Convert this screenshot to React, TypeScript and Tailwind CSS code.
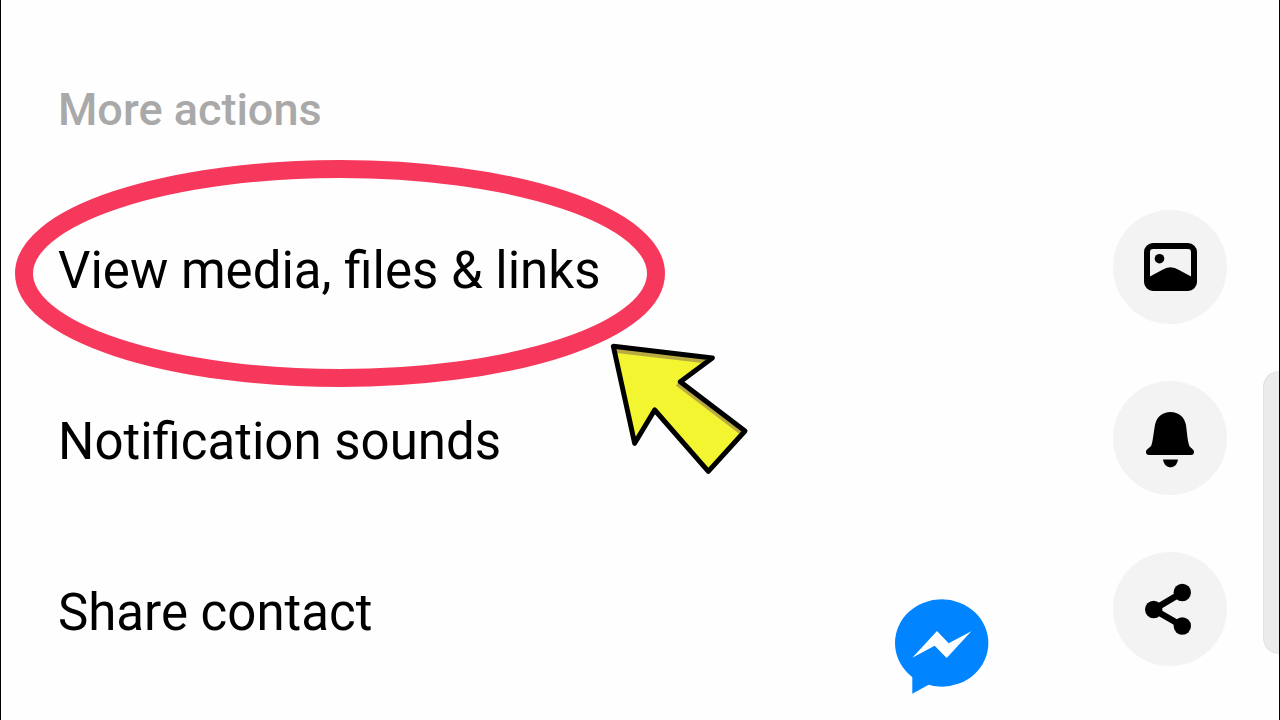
import type { ReactNode } from 'react'

const ImageIcon = () => (
  <svg viewBox="0 0 114 114" className="size-full" aria-hidden="true">
    <rect
      x="34"
      y="36"
      width="47"
      height="42"
      rx="6"
      fill="none"
      stroke="#000"
      strokeWidth="6"
    />
    <circle cx="46.5" cy="48.7" r="4.8" />
    <path d="M36 67 L49 60 Q57.5 54.5 66 60 L79 67 V79 H36 Z" />
  </svg>
)

const BellIcon = () => (
  <svg viewBox="0 0 114 114" className="size-full" aria-hidden="true">
    <path d="M57.5 31 C65.5 31 71.5 36 73 44 C74 52 74.5 59 76 64 C77 67.5 81 67.5 81 71 Q81 74 78 74 H36 Q33 74 33 71 C33 67.5 37 67.5 38.5 64 C40 59 40.5 52 42 44 C43.5 36 49.5 31 57.5 31 Z" />
    <path d="M50 78.5 H65 C64 84 61 86.3 57.5 86.3 C54 86.3 51 84 50 78.5 Z" />
  </svg>
)

const ShareIcon = () => (
  <svg viewBox="0 0 114 114" className="size-full" aria-hidden="true">
    <path
      d="M69.3 40.5 L40.7 57.5 L69.3 74"
      fill="none"
      stroke="#000"
      strokeWidth="6.5"
    />
    <circle cx="40.7" cy="57.5" r="8.7" />
    <circle cx="69.3" cy="40.5" r="8.7" />
    <circle cx="69.3" cy="74" r="8.7" />
  </svg>
)

const MessengerIcon = () => (
  <svg viewBox="44 41 282 285" className="size-full" aria-hidden="true">
    <ellipse cx="184" cy="173" rx="140" ry="131" fill="#0084ff" />
    <path d="M96 265 V325 L149 296 Z" fill="#0084ff" />
    <path
      d="M96 217 L170 137 L205 174 L273 138 L199 218 L163 181 Z"
      fill="#fff"
    />
  </svg>
)

// Ring and arrow drawn over the highlighted action
const Highlight = () => (
  <svg
    viewBox="0 0 736 320"
    className="pointer-events-none absolute -top-6 left-3 h-80 w-[736px]"
    aria-hidden="true"
  >
    <ellipse
      cx="327"
      cy="116.5"
      rx="316"
      ry="104.5"
      fill="none"
      stroke="#f7385d"
      strokeWidth="18"
    />
    <g transform="translate(577 173) scale(0.3333)">
      <path
        d="M70 49 L367 84 L271 155 L465 303 L355 424 L194 240 L134 340 Z"
        fill="#f3f531"
      />
      <path
        d="M80 62 L345 93 M262 161 L452 306"
        fill="none"
        stroke="#b9ab42"
        strokeWidth="14"
      />
      <path
        d="M70 49 L367 84 L271 155 L465 303 L355 424 L194 240 L134 340 Z"
        fill="none"
        stroke="#000"
        strokeWidth="15"
        strokeLinejoin="round"
      />
    </g>
  </svg>
)

const actions: { label: string; icon: ReactNode; highlighted?: boolean }[] = [
  {
    label: 'View media, files & links',
    icon: <ImageIcon />,
    highlighted: true
  },
  { label: 'Notification sounds', icon: <BellIcon /> },
  { label: 'Share contact', icon: <ShareIcon /> }
]

const App = () => {
  return (
    <main className="relative min-h-screen border-x border-black bg-[#fefefe] pt-20 font-[Roboto,sans-serif] text-black">
      <h1 className="px-[57px] text-[45px] leading-[60px] font-medium text-[#a9a9a9]">
        More actions
      </h1>

      <ul className="pt-[41px]">
        {actions.map(({ label, icon, highlighted }) => (
          <li key={label} className="relative">
            <button
              type="button"
              className="flex w-full items-center justify-between pt-[29px] pr-13 pb-7 pl-[57px] text-left"
            >
              <span className="pt-2 text-[51px] leading-[60px]">{label}</span>
              <span className="size-[114px] shrink-0 rounded-full bg-[#f3f3f3]">
                {icon}
              </span>
            </button>
            {highlighted ? <Highlight /> : null}
          </li>
        ))}
      </ul>

      <button
        type="button"
        aria-label="Messenger"
        className="absolute top-[599px] right-[290px] h-[95px] w-[94px]"
      >
        <MessengerIcon />
      </button>

      <div className="absolute top-[371px] right-0 h-[283px] w-4 rounded-l-2xl border border-r-0 border-[#e2e2e2] bg-[#ebebeb]" />
    </main>
  )
}

export default App
